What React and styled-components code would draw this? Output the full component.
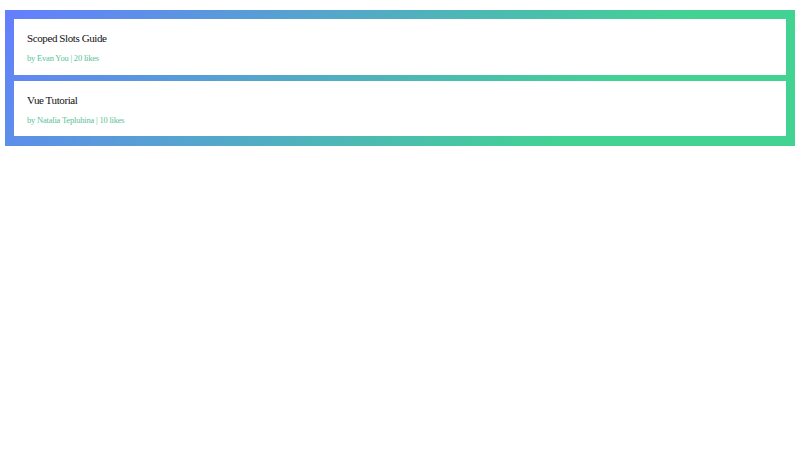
import React from "react";
import styled, { createGlobalStyle } from "styled-components";

const Global = createGlobalStyle`
  html, body { margin: 0; padding: 0; background: #fff; }
  body { font-family: "Liberation Serif", "Times New Roman", serif; }
`;

const List = styled.ul`
  list-style: none;
  margin: 10px 5px 0 5px;
  padding: 9px 9px 9.5px;
  display: flex;
  flex-direction: column;
  gap: 6px;
  background: linear-gradient(315deg, #42d392 25%, #647eff);
`;

const Item = styled.li`
  background: #fff;
  padding: 12px 13px 10px;
  height: 55.5px;
  box-sizing: border-box;
`;

const Title = styled.div`
  font-size: 11px;
  letter-spacing: -0.4px;
  color: #111;
  line-height: 15px;
`;

const Meta = styled.div`
  margin-top: 7px;
  font-size: 8.5px;
  letter-spacing: -0.2px;
  line-height: 11px;
  color: #5bbf98;
`;

const posts = [
  { title: "Scoped Slots Guide", author: "Evan You", likes: 20 },
  { title: "Vue Tutorial", author: "Natalia Tepluhina", likes: 10 },
];

export default function App() {
  return (
    <>
      <Global />
      <List>
        {posts.map((p) => (
          <Item key={p.title}>
            <Title>{p.title}</Title>
            <Meta>
              by {p.author} | {p.likes} likes
            </Meta>
          </Item>
        ))}
      </List>
    </>
  );
}
